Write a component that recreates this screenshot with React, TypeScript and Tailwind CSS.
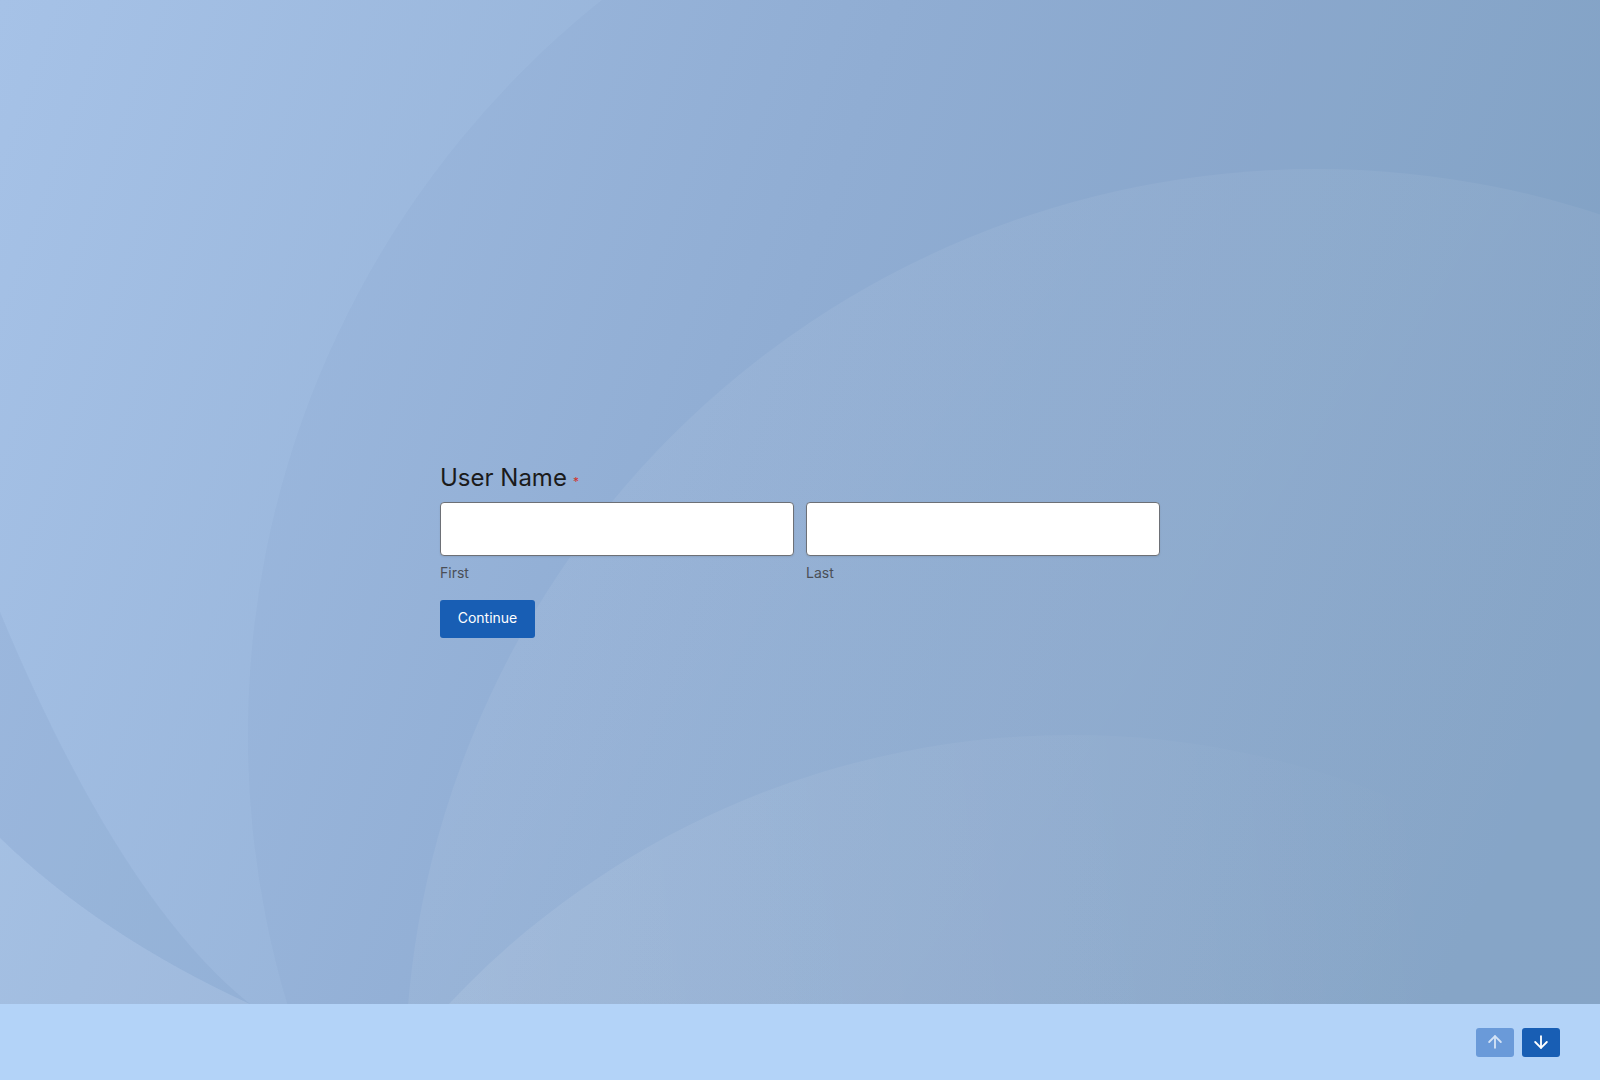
import React from "react";
import { ArrowUp, ArrowDown } from "lucide-react";

function Background() {
  return (
    <svg
      className="absolute inset-0 h-full w-full"
      viewBox="0 0 1600 1080"
      preserveAspectRatio="none"
      aria-hidden="true"
    >
      <defs>
        <linearGradient id="base" x1="0" y1="0" x2="1600" y2="560" gradientUnits="userSpaceOnUse">
          <stop offset="0" stopColor="#a6c2e7" />
          <stop offset="0.5" stopColor="#94b1d6" />
          <stop offset="1" stopColor="#84a4c7" />
        </linearGradient>
        <linearGradient id="lightC" x1="300" y1="200" x2="1600" y2="1000" gradientUnits="userSpaceOnUse">
          <stop offset="0" stopColor="#ffffff" stopOpacity="0.07" />
          <stop offset="1" stopColor="#ffffff" stopOpacity="0.04" />
        </linearGradient>
        <linearGradient id="lightD" x1="450" y1="900" x2="1450" y2="800" gradientUnits="userSpaceOnUse">
          <stop offset="0" stopColor="#ffffff" stopOpacity="0.09" />
          <stop offset="0.55" stopColor="#ffffff" stopOpacity="0.04" />
          <stop offset="1" stopColor="#ffffff" stopOpacity="0" />
        </linearGradient>
      </defs>
      <rect x="0" y="0" width="1600" height="1080" fill="url(#base)" />
      <circle cx="1188" cy="735" r="940" fill="#3a5a8a" fillOpacity="0.035" />
      <circle cx="1316" cy="1080" r="911" fill="url(#lightC)" />
      <circle cx="1071" cy="1589" r="854" fill="url(#lightD)" />
      <path d="M0,612 Q120,900 250,1004 Q100,935 0,838 Z" fill="#3a5a8a" fillOpacity="0.06" />
      <path d="M0,838 Q100,935 250,1004 L0,1004 Z" fill="#ffffff" fillOpacity="0.05" />
    </svg>
  );
}

export default function App() {
  return (
    <div
      className="relative flex h-[1080px] w-full flex-col overflow-hidden"
      style={{ fontFamily: "Inter, 'Noto Sans', sans-serif" }}
    >
      <Background />
      <main className="relative flex-1">
        <div className="mx-auto w-[720px] pt-[462px]">
          <label className="flex items-baseline text-[24px] leading-[32px] text-[#1b1b1b]">
            User Name
            <span className="ml-[6px] text-[12px] leading-none text-[#d0342c]">*</span>
          </label>
          <div className="mt-[8px] grid grid-cols-2 gap-[12px]">
            <div className="flex flex-col">
              <input
                type="text"
                className="h-[54px] w-full rounded-[4px] border border-[#6d7076] bg-white shadow-[0_1px_2px_rgba(0,0,0,0.08)] outline-none"
              />
              <span className="mt-[7px] text-[14px] leading-[20px] text-[#4a4f57]">First</span>
            </div>
            <div className="flex flex-col">
              <input
                type="text"
                className="h-[54px] w-full rounded-[4px] border border-[#6d7076] bg-white shadow-[0_1px_2px_rgba(0,0,0,0.08)] outline-none"
              />
              <span className="mt-[7px] text-[14px] leading-[20px] text-[#4a4f57]">Last</span>
            </div>
          </div>
          <button
            type="button"
            className="mt-[17px] flex h-[38px] w-[95px] items-center justify-center rounded-[3px] bg-[#185eb4] pb-[3px] text-[14px] font-normal text-white"
          >
            Continue
          </button>
        </div>
      </main>
      <footer className="relative flex h-[76px] items-center justify-end gap-[8px] bg-[#b3d3f8] pr-[40px]">
        <button
          type="button"
          className="flex h-[29px] w-[38px] items-center justify-center rounded-[3px] bg-[#6a9ad9]"
        >
          <ArrowUp size={20} strokeWidth={2.2} className="text-[#d4e3f6]" />
        </button>
        <button
          type="button"
          className="flex h-[29px] w-[38px] items-center justify-center rounded-[3px] bg-[#185eb4]"
        >
          <ArrowDown size={20} strokeWidth={2.2} className="text-white" />
        </button>
      </footer>
    </div>
  );
}
